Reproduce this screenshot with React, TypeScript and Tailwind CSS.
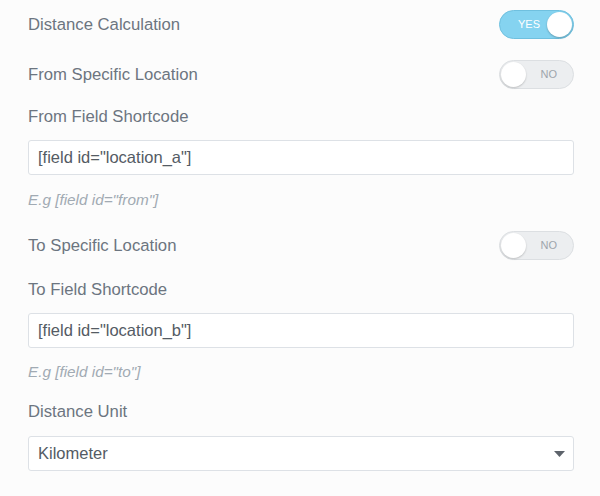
import React from "react";

const font = { fontFamily: "'Liberation Sans', Roboto, Arial, sans-serif" };

const Toggle: React.FC<{ on: boolean }> = ({ on }) =>
  on ? (
    <div className="relative flex h-[29px] w-[75px] items-center rounded-full border border-[#6fc0df] bg-[#85d3f0]">
      <span className="ml-[18px] text-[11px] text-white">YES</span>
      <div className="absolute right-[1px] top-[1px] h-[25px] w-[25px] rounded-full bg-white shadow-[0_1px_2px_rgba(0,0,0,0.25)]" />
    </div>
  ) : (
    <div className="relative flex h-[29px] w-[75px] items-center justify-end rounded-full border border-[#dcdfe2] bg-[#eceef0]">
      <span className="mr-[16px] text-[11px] text-[#9ea5ac]">NO</span>
      <div className="absolute left-[1px] top-[1px] h-[25px] w-[25px] rounded-full bg-white shadow-[0_1px_2px_rgba(0,0,0,0.2)]" />
    </div>
  );

const Label: React.FC<{ children: React.ReactNode; className?: string }> = ({ children, className }) => (
  <div className={`text-[16.7px] leading-[20px] text-[#6c7580] ${className ?? ""}`}>{children}</div>
);

const Input: React.FC<{ value: string; className?: string }> = ({ value, className }) => (
  <div
    className={`flex h-[35px] items-center rounded-[3px] border border-[#dde1e6] bg-white px-[9px] text-[16.5px] text-[#545b64] ${className ?? ""}`}
  >
    {value}
  </div>
);

const Hint: React.FC<{ children: React.ReactNode; className?: string }> = ({ children, className }) => (
  <div className={`text-[15.3px] italic leading-[20px] text-[#a1aab3] ${className ?? ""}`}>{children}</div>
);

export default function App() {
  return (
    <div className="h-[496px] w-[600px] overflow-hidden bg-[#fcfcfc] pl-[28px] pr-[26px] pt-[10px]" style={font}>
      <div className="flex h-[29px] items-center justify-between">
        <Label>Distance Calculation</Label>
        <Toggle on />
      </div>
      <div className="mt-[21px] flex h-[29px] items-center justify-between">
        <Label>From Specific Location</Label>
        <Toggle on={false} />
      </div>
      <Label className="mt-[18px]">From Field Shortcode</Label>
      <Input className="mt-[13px]" value={'[field id="location_a"]'} />
      <Hint className="mt-[15px]">E.g [field id="from"]</Hint>

      <div className="mt-[21px] flex h-[29px] items-center justify-between">
        <Label>To Specific Location</Label>
        <Toggle on={false} />
      </div>
      <Label className="mt-[20px]">To Field Shortcode</Label>
      <Input className="mt-[13px]" value={'[field id="location_b"]'} />
      <Hint className="mt-[14px]">E.g [field id="to"]</Hint>

      <Label className="mt-[20px]">Distance Unit</Label>
      <div className="mt-[14px] flex h-[35px] items-center justify-between rounded-[3px] border border-[#dde1e6] bg-white pl-[9px] pr-[8px] text-[16.5px] text-[#545b64]">
        <span>Kilometer</span>
        <svg width="11" height="6" viewBox="0 0 11 6">
          <path d="M0 0h11L5.5 6z" fill="#5d636b" />
        </svg>
      </div>
    </div>
  );
}
